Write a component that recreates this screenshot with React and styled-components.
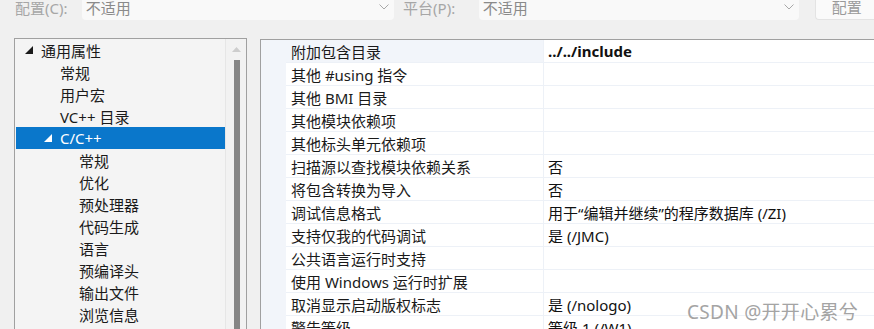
import React from 'react';
import styled, { createGlobalStyle } from 'styled-components';

const GlobalStyle = createGlobalStyle`
  html, body {
    margin: 0;
    padding: 0;
    background: #f0f0f0;
  }
  body {
    font-family: "Noto Sans", "Noto Sans CJK SC", sans-serif;
    overflow: hidden;
  }
`;

const Page = styled.div`
  position: relative;
  width: 874px;
  height: 329px;
  overflow: hidden;
  background: #f0f0f0;
  font-size: 15px;
`;

const TopBar = styled.div`
  display: flex;
  align-items: center;
  height: 26px;
  margin-top: -6px;
  padding-left: 15px;
`;

const FieldLabel = styled.span`
  color: #a6a6a6;
  width: ${(p) => p.width}px;
  white-space: nowrap;
`;

const Combo = styled.div`
  display: flex;
  align-items: center;
  justify-content: space-between;
  width: ${(p) => p.width}px;
  height: 100%;
  box-sizing: border-box;
  padding: 0 5px 0 4px;
  background: #f9f9f9;
  border-radius: 0 0 4px 4px;
  color: #8a8a8a;
  margin-right: ${(p) => p.gap}px;
`;

const TopButton = styled.div`
  height: 100%;
  width: 60px;
  box-sizing: border-box;
  padding-left: 16px;
  display: flex;
  align-items: center;
  background: #fafafa;
  border: 1px solid #e3e3e3;
  border-top: none;
  border-right: none;
  border-radius: 0 0 0 4px;
  color: #9a9a9a;
  white-space: nowrap;
`;

const Body = styled.div`
  display: flex;
  align-items: flex-start;
  padding-top: 18px;
  padding-left: 14px;
`;

const TreePanel = styled.div`
  display: flex;
  width: 233px;
  height: 300px;
  box-sizing: border-box;
  border: 1px solid #a0a0a0;
  background: #f4f4f4;
`;

const TreeList = styled.div`
  flex: 1;
`;

const TreeRow = styled.div`
  display: flex;
  align-items: center;
  height: 22px;
  margin-left: 1px;
  padding-left: ${(p) => p.indent}px;
  background: ${(p) => (p.selected ? '#0a77cb' : 'transparent')};
  color: ${(p) => (p.selected ? '#ffffff' : '#1a1a1a')};
  white-space: nowrap;
`;

const Expander = styled.svg`
  width: 8px;
  height: 8px;
  margin-right: 8px;
  flex-shrink: 0;
`;

const ScrollTrack = styled.div`
  width: 20px;
  border-left: 1px solid #e6e6e6;
  background: #f2f2f2;
  display: flex;
  flex-direction: column;
  align-items: center;
`;

const ScrollArrow = styled.svg`
  margin-top: 8px;
  width: 9px;
  height: 5px;
`;

const ScrollThumb = styled.div`
  margin-top: 8px;
  margin-left: 1px;
  width: 6px;
  flex: 1;
  background: #868686;
`;

const PropPanel = styled.div`
  flex: 1;
  margin-left: 13px;
  margin-top: 1px;
  height: 300px;
  border-left: 1px solid #a0a0a0;
  border-top: 1px solid #a0a0a0;
  background: #ffffff;
`;

const PropRow = styled.div`
  display: grid;
  grid-template-columns: 25px 258px 1fr;
  height: 23px;
`;

const Strip = styled.div`
  background: #f2f5fa;
`;

const NameCell = styled.div`
  display: flex;
  align-items: center;
  padding-left: 5px;
  background: ${(p) => (p.active ? '#f2f5fa' : '#ffffff')};
  border-bottom: 1px solid #edf1f7;
  border-right: 1px solid #edf1f7;
  color: #1a1a1a;
  white-space: nowrap;
`;

const ValueCell = styled.div`
  display: flex;
  align-items: center;
  padding-left: 4px;
  border-bottom: 1px solid #edf1f7;
  color: #111111;
  font-weight: ${(p) => (p.bold ? 700 : 400)};
  white-space: nowrap;
`;

const Watermark = styled.div`
  position: absolute;
  left: 687px;
  top: 297px;
  font-size: 19px;
  letter-spacing: 0.3px;
  color: #a4a4a4;
  text-shadow: 0 0 2px #ffffff;
  white-space: nowrap;
`;

const treeItems = [
  { label: '通用属性', indent: 9, expander: true },
  { label: '常规', indent: 44 },
  { label: '用户宏', indent: 44 },
  { label: 'VC++ 目录', indent: 44 },
  { label: 'C/C++', indent: 28, expander: true, selected: true },
  { label: '常规', indent: 63 },
  { label: '优化', indent: 63 },
  { label: '预处理器', indent: 63 },
  { label: '代码生成', indent: 63 },
  { label: '语言', indent: 63 },
  { label: '预编译头', indent: 63 },
  { label: '输出文件', indent: 63 },
  { label: '浏览信息', indent: 63 },
];

const props = [
  { name: '附加包含目录', value: '../../include', bold: true, active: true },
  { name: '其他 #using 指令', value: '' },
  { name: '其他 BMI 目录', value: '' },
  { name: '其他模块依赖项', value: '' },
  { name: '其他标头单元依赖项', value: '' },
  { name: '扫描源以查找模块依赖关系', value: '否' },
  { name: '将包含转换为导入', value: '否' },
  { name: '调试信息格式', value: '用于“编辑并继续”的程序数据库 (/ZI)' },
  { name: '支持仅我的代码调试', value: '是 (/JMC)' },
  { name: '公共语言运行时支持', value: '' },
  { name: '使用 Windows 运行时扩展', value: '' },
  { name: '取消显示启动版权标志', value: '是 (/nologo)' },
  { name: '警告等级', value: '等级 1 (/W1)' },
];

const Chevron = () => (
  <svg width="10" height="6" viewBox="0 0 10 6">
    <polyline points="0.5,0.5 5,5 9.5,0.5" fill="none" stroke="#a8a8a8" strokeWidth="1" />
  </svg>
);

const App = () => (
  <Page>
    <GlobalStyle />
    <TopBar>
      <FieldLabel width={68}>配置(C):</FieldLabel>
      <Combo width={318} gap={9}>
        <span>不适用</span>
        <Chevron />
      </Combo>
      <FieldLabel width={77}>平台(P):</FieldLabel>
      <Combo width={326} gap={16}>
        <span>不适用</span>
        <Chevron />
      </Combo>
      <TopButton>配置</TopButton>
    </TopBar>
    <Body>
      <TreePanel>
        <TreeList>
          {treeItems.map((item, i) => (
            <TreeRow key={i} indent={item.indent} selected={item.selected}>
              {item.expander && (
                <Expander viewBox="0 0 8 8">
                  <polygon points="8,0 8,8 0,8" fill={item.selected ? '#ffffff' : '#1a1a1a'} />
                </Expander>
              )}
              {item.label}
            </TreeRow>
          ))}
        </TreeList>
        <ScrollTrack>
          <ScrollArrow viewBox="0 0 9 5">
            <polygon points="4.5,0 9,5 0,5" fill="#cdcdcd" />
          </ScrollArrow>
          <ScrollThumb />
        </ScrollTrack>
      </TreePanel>
      <PropPanel>
        {props.map((p, i) => (
          <PropRow key={i}>
            <Strip />
            <NameCell active={p.active}>{p.name}</NameCell>
            <ValueCell bold={p.bold}>{p.value}</ValueCell>
          </PropRow>
        ))}
      </PropPanel>
    </Body>
    <Watermark>CSDN @开开心累兮</Watermark>
  </Page>
);

export default App;
